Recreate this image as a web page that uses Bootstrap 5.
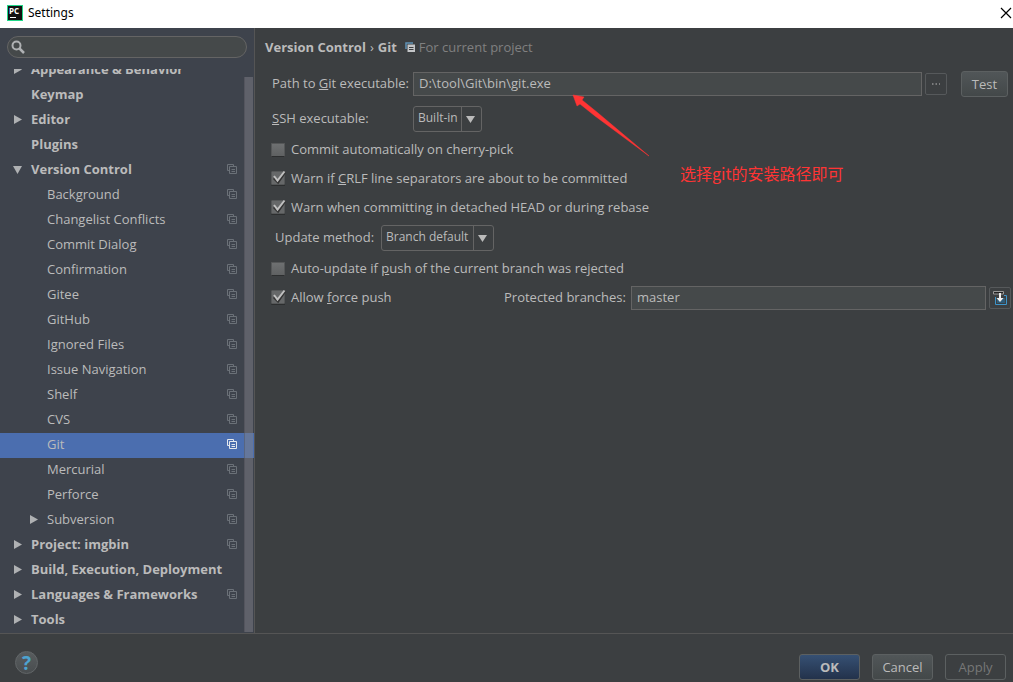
<!DOCTYPE html>
<html lang="en">
<head>
<meta charset="utf-8">
<meta name="viewport" content="width=device-width, initial-scale=1">
<title>Settings</title>
<link href="https://cdn.jsdelivr.net/npm/bootstrap@5.3.0/dist/css/bootstrap.min.css" rel="stylesheet">
<style>
  body { background: #3c3f41; color: #bbb; font: 13px/18px "Open Sans", "Noto Sans CJK SC", sans-serif; }
  .title-bar { height: 28px; background: #fff; color: #000; font: 12px/18px "Noto Sans", sans-serif; padding: 0 1px 3px 7px; }
  .title-text { padding: 1px 0 0 5px; }
  .plain-btn { background: none; border: 0; padding: 0; line-height: 0; }
  .sidebar { width: 255px; background: #3e434c; border-right: 1px solid #555; }
  .search-box { margin: 8px 7px 11px; }
  .search-box input { height: 22px; background: #45494a; border: 1px solid #646464; border-radius: 11px; color: #bbb; padding: 0 8px 0 28px; font-size: 13px; }
  .search-box svg { left: 4px; top: 4px; }
  .tree-list { margin-top: -11px; }
  .tree-link { height: 25px; padding: 0 17px 4px 13px; color: #bbb; text-decoration: none; }
  .tree-link.is-top { font-weight: 700; }
  .tree-link.is-sub { padding-left: 29px; }
  .tree-link.is-active { background: #4b6eaf; }
  .tree-arrow { width: 9px; height: 9px; margin: 2px 9px 0 0; fill: #afb1b3; }
  .tree-copy { color: #6b7178; margin-top: 1px; }
  .is-active .tree-copy { color: #e4e8ee; }
  .scroll-thumb { right: 1px; top: 8px; bottom: 1px; width: 9px; background: rgba(128,128,136,.5); border-left: 1px solid rgba(60,60,66,.3); }
  .settings-pane { min-width: 0; padding: 0 2px 0 10px; }
  .settings-pane label { padding-bottom: 2px; }
  .pane-head { height: 38px; }
  .muted-note { color: #808080; }
  .row-path { height: 36px; padding: 0 3px 0 7px; }
  .row-ssh { height: 33px; padding-left: 7px; }
  .row-check { height: 29px; padding-left: 6px; }
  .row-update { height: 32px; padding-left: 10px; }
  .label-col { width: 141px; }
  .label-update { width: 106px; }
  .field { height: 24px; background: #45494a; border: 1px solid #646464; border-radius: 0; color: #bbb; padding: 0 5px 2px; font-size: 13px; min-width: 0; }
  .drop { appearance: none; height: 26px; border: 1px solid #646464; border-radius: 3px; color: #bbb; font-size: 12px; padding: 0 20px 2px 4px;
    background: url("data:image/svg+xml,%3Csvg xmlns='http://www.w3.org/2000/svg' width='20' height='24'%3E%3Cpath d='M.5 0v24' stroke='%23646464'/%3E%3Cpath d='M5 9h9l-4.500 7z' fill='%23bbb'/%3E%3C/svg%3E") right center no-repeat #3c3f41; }
  .drop-ssh { width: 69px; }
  .drop-update { width: 113px; }
  .tick { appearance: none; width: 14px; height: 14px; margin: 0 6px 0 0; border: 1px solid #555758; border-bottom-color: #2c2e2f; border-radius: 1px; background: linear-gradient(#6e7071, #5f6162); }
  .tick:checked { width: 16px; height: 16px; margin: 0 4px 2px 0; border: 0;
    background: url("data:image/svg+xml,%3Csvg xmlns='http://www.w3.org/2000/svg' width='16' height='16'%3E%3Crect x='.5' y='1.500' width='13' height='13' rx='1' fill='%23666869' stroke='%23555758'/%3E%3Cpath d='M0 15.500h14' stroke='%232c2e2f'/%3E%3Cpath d='M3 8l4 4 7-10' fill='none' stroke='%23333' stroke-width='3'/%3E%3Cpath d='M3 6l3.500 4.500L13.500 1.500' fill='none' stroke='%23c0c0c0' stroke-width='2'/%3E%3C/svg%3E") no-repeat; }
  .icon-btn { width: 22px; height: 22px; margin-left: 3px; border: 1px solid #56595b; border-radius: 2px; background: #3c3f41; color: #bbb; }
  .push-btn { height: 26px; border: 1px solid #5c6061; border-radius: 3px; color: #bbb; font-size: 13px; line-height: 18px; padding: 0 0 1px; background: linear-gradient(#515658, #434849); }
  .push-btn:hover { color: #ddd; }
  .push-test { width: 47px; margin-left: 14px; }
  .push-foot { width: 61px; }
  .push-ok { background: linear-gradient(#365073, #23324b); font-weight: 700; }
  .push-btn.push-apply:disabled { background: none; color: #777; border-color: #5c6061; opacity: 1; }
  .label-protected { width: 127px; }
  .force-part { width: 233px; }
  .annotation { left: 307px; top: 28px; color: #ff3434; }
  .annotation-text { left: 108px; top: 67px; font: 16px/24px "Noto Sans CJK SC", sans-serif; }
  .foot-bar { height: 49px; border-top: 1px solid #555; padding: 17px 7px 0 15px; }
  .foot-actions { gap: 12px; padding-top: 3px; }
  .help-btn { width: 23px; height: 23px; border: 1px solid #626668; border-radius: 50%; background: linear-gradient(#585c5e, #494d4f); color: #4da3d0; font: 700 19px/20px "Open Sans", sans-serif; padding: 0; }
</style>
</head>
<body>
<svg class="d-none" aria-hidden="true">
  <symbol id="copy" viewBox="0 0 10 10"><path d="M2 6.500H.5v-6h6V2M2.500 2.500h7v7h-7z M4.500 5.500H8M4.500 7.500H8" fill="none" stroke="currentColor"/></symbol>
  <symbol id="copy-project" viewBox="0 0 10 10"><path d="M1 7V1h7" fill="none" stroke="#5f93b5" stroke-width="1.500"/><path d="M2.500 2.500H10V10H2.500z" fill="#c4c6c8"/><path d="M4 5.500h4.500M4 7.500h4.500" stroke="#3c3f41"/></symbol>
  <symbol id="right" viewBox="0 0 9 9"><path d="M1 0l8 4.500L1 9z"/></symbol>
  <symbol id="down" viewBox="0 0 9 9"><path d="M0 1h9L4.500 9z"/></symbol>
</svg>
<div class="min-vh-100 d-flex flex-column">
  <header class="title-bar d-flex align-items-center">
    <svg width="16" height="16" viewBox="0 0 16 16"><rect width="16" height="16" fill="#21d789"/><rect x="1" y="1" width="14" height="14" fill="#111"/><text x="2" y="9" font-family="Open Sans" font-weight="700" font-size="8" fill="#fff">PC</text><path d="M3 12.500h6" stroke="#fff"/></svg>
    <span class="title-text">Settings</span>
    <button class="plain-btn ms-auto" aria-label="Close"><svg width="12" height="12" viewBox="0 0 12 12"><path d="M1 1l10 10M11 1L1 11" stroke="#000" stroke-width="1.200"/></svg></button>
  </header>
  <div class="flex-grow-1 d-flex">
    <nav class="sidebar flex-shrink-0" aria-label="Settings sections">
      <div class="search-box position-relative">
        <input type="search" class="w-100 d-block" aria-label="Search settings">
        <svg class="position-absolute" width="14" height="14" viewBox="0 0 14 14" fill="none" stroke="#afb1b3"><circle cx="5.500" cy="5.500" r="4" stroke-width="2"/><path d="M8.500 8.500l4.500 4.500" stroke-width="2.500"/></svg>
      </div>
      <div class="position-relative overflow-hidden">
        <ul class="tree-list list-unstyled mb-0">
          <li><a href="#" class="tree-link is-top d-flex align-items-center"><svg class="tree-arrow"><use href="#right"/></svg>Appearance &amp; Behavior</a></li>
          <li><a href="#" class="tree-link is-top d-flex align-items-center"><svg class="tree-arrow"></svg>Keymap</a></li>
          <li><a href="#" class="tree-link is-top d-flex align-items-center"><svg class="tree-arrow"><use href="#right"/></svg>Editor</a></li>
          <li><a href="#" class="tree-link is-top d-flex align-items-center"><svg class="tree-arrow"></svg>Plugins</a></li>
          <li><a href="#" class="tree-link is-top d-flex align-items-center"><svg class="tree-arrow"><use href="#down"/></svg>Version Control<svg class="tree-copy ms-auto" width="10" height="10"><use href="#copy"/></svg></a></li>
          <li><a href="#" class="tree-link is-sub d-flex align-items-center"><svg class="tree-arrow"></svg>Background<svg class="tree-copy ms-auto" width="10" height="10"><use href="#copy"/></svg></a></li>
          <li><a href="#" class="tree-link is-sub d-flex align-items-center"><svg class="tree-arrow"></svg>Changelist Conflicts<svg class="tree-copy ms-auto" width="10" height="10"><use href="#copy"/></svg></a></li>
          <li><a href="#" class="tree-link is-sub d-flex align-items-center"><svg class="tree-arrow"></svg>Commit Dialog<svg class="tree-copy ms-auto" width="10" height="10"><use href="#copy"/></svg></a></li>
          <li><a href="#" class="tree-link is-sub d-flex align-items-center"><svg class="tree-arrow"></svg>Confirmation<svg class="tree-copy ms-auto" width="10" height="10"><use href="#copy"/></svg></a></li>
          <li><a href="#" class="tree-link is-sub d-flex align-items-center"><svg class="tree-arrow"></svg>Gitee<svg class="tree-copy ms-auto" width="10" height="10"><use href="#copy"/></svg></a></li>
          <li><a href="#" class="tree-link is-sub d-flex align-items-center"><svg class="tree-arrow"></svg>GitHub<svg class="tree-copy ms-auto" width="10" height="10"><use href="#copy"/></svg></a></li>
          <li><a href="#" class="tree-link is-sub d-flex align-items-center"><svg class="tree-arrow"></svg>Ignored Files<svg class="tree-copy ms-auto" width="10" height="10"><use href="#copy"/></svg></a></li>
          <li><a href="#" class="tree-link is-sub d-flex align-items-center"><svg class="tree-arrow"></svg>Issue Navigation<svg class="tree-copy ms-auto" width="10" height="10"><use href="#copy"/></svg></a></li>
          <li><a href="#" class="tree-link is-sub d-flex align-items-center"><svg class="tree-arrow"></svg>Shelf<svg class="tree-copy ms-auto" width="10" height="10"><use href="#copy"/></svg></a></li>
          <li><a href="#" class="tree-link is-sub d-flex align-items-center"><svg class="tree-arrow"></svg>CVS<svg class="tree-copy ms-auto" width="10" height="10"><use href="#copy"/></svg></a></li>
          <li><a href="#" class="tree-link is-sub is-active d-flex align-items-center" aria-current="page"><svg class="tree-arrow"></svg>Git<svg class="tree-copy ms-auto" width="10" height="10"><use href="#copy"/></svg></a></li>
          <li><a href="#" class="tree-link is-sub d-flex align-items-center"><svg class="tree-arrow"></svg>Mercurial<svg class="tree-copy ms-auto" width="10" height="10"><use href="#copy"/></svg></a></li>
          <li><a href="#" class="tree-link is-sub d-flex align-items-center"><svg class="tree-arrow"></svg>Perforce<svg class="tree-copy ms-auto" width="10" height="10"><use href="#copy"/></svg></a></li>
          <li><a href="#" class="tree-link is-sub d-flex align-items-center"><svg class="tree-arrow"><use href="#right"/></svg>Subversion<svg class="tree-copy ms-auto" width="10" height="10"><use href="#copy"/></svg></a></li>
          <li><a href="#" class="tree-link is-top d-flex align-items-center"><svg class="tree-arrow"><use href="#right"/></svg>Project: imgbin<svg class="tree-copy ms-auto" width="10" height="10"><use href="#copy"/></svg></a></li>
          <li><a href="#" class="tree-link is-top d-flex align-items-center"><svg class="tree-arrow"><use href="#right"/></svg>Build, Execution, Deployment</a></li>
          <li><a href="#" class="tree-link is-top d-flex align-items-center"><svg class="tree-arrow"><use href="#right"/></svg>Languages &amp; Frameworks<svg class="tree-copy ms-auto" width="10" height="10"><use href="#copy"/></svg></a></li>
          <li><a href="#" class="tree-link is-top d-flex align-items-center"><svg class="tree-arrow"><use href="#right"/></svg>Tools</a></li>
        </ul>
        <div class="scroll-thumb position-absolute"></div>
      </div>
    </nav>
    <main class="settings-pane flex-grow-1">
      <div class="pane-head d-flex align-items-center">
        <b>Version Control</b><span class="px-1">›</span><b>Git</b>
        <svg class="ms-2 me-1" width="10" height="10"><use href="#copy-project"/></svg><span class="muted-note">For current project</span>
      </div>
      <div class="row-path d-flex align-items-center position-relative">
        <label class="label-col flex-shrink-0" for="gitPath">Path to <u>G</u>it executable:</label>
        <input id="gitPath" class="field flex-grow-1" type="text" value="D:\tool\Git\bin\git.exe">
        <button class="icon-btn p-0 flex-shrink-0" aria-label="Browse"><svg class="d-block mx-auto" width="8" height="2"><path d="M0 1h1.500M3.500 1H5M7 1h1" stroke="#bbb"/></svg></button>
        <button class="push-btn push-test flex-shrink-0">Test</button>
        <div class="annotation position-absolute">
          <svg class="d-block" width="78" height="64" viewBox="0 0 78 64"><path d="M1 1l11 2-2 3 16 13 51 43-54-40L8 10l-3 2z" fill="currentColor" stroke="currentColor" stroke-width=".5"/></svg>
          <span class="annotation-text position-absolute text-nowrap">选择git的安装路径即可</span>
        </div>
      </div>
      <div class="row-ssh d-flex align-items-center">
        <label class="label-col" for="ssh"><u>S</u>SH executable:</label>
        <select id="ssh" class="drop drop-ssh"><option>Built-in</option><option>Native</option></select>
      </div>
      <div class="row-check d-flex align-items-center"><input class="tick" type="checkbox" id="c1"><label for="c1">Commit automatically on cherry-pick</label></div>
      <div class="row-check d-flex align-items-center"><input class="tick" type="checkbox" id="c2" checked><label for="c2">Warn if <u>C</u>RLF line separators are about to be committed</label></div>
      <div class="row-check d-flex align-items-center"><input class="tick" type="checkbox" id="c3" checked><label for="c3">Warn when committing in detached HEAD or during rebase</label></div>
      <div class="row-update d-flex align-items-center">
        <label class="label-update" for="upd">Update method:</label>
        <select id="upd" class="drop drop-update"><option>Branch default</option><option>Merge</option><option>Rebase</option></select>
      </div>
      <div class="row-check d-flex align-items-center"><input class="tick" type="checkbox" id="c4"><label for="c4">Auto-update if <u>p</u>ush of the current branch was rejected</label></div>
      <div class="row-check d-flex align-items-center">
        <div class="force-part d-flex align-items-center flex-shrink-0"><input class="tick" type="checkbox" id="c5" checked><label for="c5">Allow <u>f</u>orce push</label></div>
        <label class="label-protected flex-shrink-0" for="prot">Protected branches:</label>
        <input id="prot" class="field flex-grow-1" type="text" value="master">
        <button class="icon-btn p-0 flex-shrink-0" aria-label="Edit branches"><svg class="d-block mx-auto" width="16" height="16" viewBox="0 0 16 16" fill="none"><path d="M3.500 7v7.500h11v-9H12" stroke="#3d94c9"/><path d="M5 8h8v5H5z" fill="#2e5b78"/><path d="M1.500 1.500h10v2.500h-10z" fill="#222" stroke="#999"/><path d="M8 3v6" stroke="#eee" stroke-width="2"/><path d="M4.500 8h7L8 12z" fill="#eee"/></svg></button>
      </div>
    </main>
  </div>
  <footer class="foot-bar d-flex align-items-start">
    <button class="help-btn" aria-label="Help">?</button>
    <div class="foot-actions d-flex ms-auto">
      <button class="push-btn push-foot push-ok">OK</button>
      <button class="push-btn push-foot">Cancel</button>
      <button class="push-btn push-foot push-apply" disabled>Apply</button>
    </div>
  </footer>
</div>
<script src="https://cdn.jsdelivr.net/npm/bootstrap@5.3.0/dist/js/bootstrap.bundle.min.js"></script>
</body>
</html>
